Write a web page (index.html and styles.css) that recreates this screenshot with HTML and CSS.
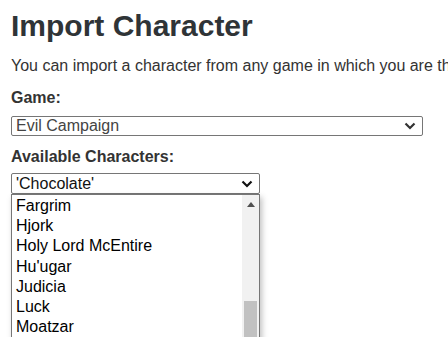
FILE: index.html
```html
<!DOCTYPE html>
<html lang="en">
<head>
  <meta charset="UTF-8">
  <meta name="viewport" content="width=device-width, initial-scale=1.0">
  <title>Import Character</title>
  <link rel="stylesheet" href="styles.css">
</head>
<body>
  <div class="page">
    <h1>Import Character</h1>
    <p class="intro">You can import a character from any game in which you are the GM.</p>

    <label class="field-label" for="game">Game:</label>
    <div class="fake-select game-select">
      <span>Evil Campaign</span>
      <svg class="chev" width="12" height="8" viewBox="0 0 12 8"><path d="M1.5 1.5 L6 6 L10.5 1.5" fill="none" stroke="#333" stroke-width="2.2"/></svg>
    </div>

    <label class="field-label chars-label" for="chars">Available Characters:</label>
    <div class="char-wrap">
      <div class="fake-select char-select">
        <span>'Chocolate'</span>
        <svg class="chev" width="12" height="8" viewBox="0 0 12 8"><path d="M1.5 1.5 L6 6 L10.5 1.5" fill="none" stroke="#111" stroke-width="2.2"/></svg>
      </div>
      <div class="dropdown">
        <ul class="options">
          <li>Fargrim</li>
          <li>Hjork</li>
          <li>Holy Lord McEntire</li>
          <li>Hu'ugar</li>
          <li>Judicia</li>
          <li>Luck</li>
          <li>Moatzar</li>
        </ul>
        <div class="scrollbar">
          <svg class="arrow-up" width="8" height="5" viewBox="0 0 8 5"><path d="M0 5 L4 0 L8 5 Z" fill="#505050"/></svg>
          <div class="thumb"></div>
        </div>
      </div>
    </div>
  </div>
</body>
</html>
```

FILE: styles.css
```css
body {
  margin: 0;
  padding: 0;
  background: #fff;
}
.page {
  padding: 0 11px;
  height: 337px;
  box-sizing: border-box;
  overflow: hidden;
  font-family: "Liberation Sans", Arial, sans-serif;
  color: #333;
  white-space: nowrap;
}
h1 {
  font-size: 30px;
  font-weight: bold;
  margin: 0;
  padding-top: 8px;
  line-height: 36px;
  color: #2f3437;
}
.intro {
  font-size: 16px;
  margin: 12px 0 0 0;
  line-height: 20px;
}
.field-label {
  display: block;
  font-size: 16px;
  font-weight: bold;
  line-height: 20px;
  margin-top: 12px;
}
.fake-select {
  display: flex;
  align-items: center;
  justify-content: space-between;
  box-sizing: border-box;
  height: 20px;
  border: 1px solid #767676;
  border-radius: 2px;
  padding: 0 6px 0 4px;
  font-size: 16px;
}
.game-select {
  width: 412px;
  margin-top: 8px;
  color: #444;
}
.chars-label {
  margin-top: 11px;
}
.char-wrap {
  width: 249px;
  margin-top: 6px;
}
.char-select {
  height: 21px;
  color: #111;
}
.dropdown {
  position: relative;
  width: 249px;
  height: 150px;
  box-sizing: border-box;
  border: 1px solid #767676;
  background: #fff;
  display: flex;
  box-shadow: 2px 3px 6px rgba(0, 0, 0, 0.25);
  overflow: hidden;
}
.options {
  list-style: none;
  margin: 0;
  padding: 1px 0 0 0;
  flex: 1;
  color: #000;
  font-size: 16px;
}
.options li {
  height: 20.2px;
  line-height: 20px;
  padding-left: 4px;
}
.scrollbar {
  width: 17px;
  background: #f1f1f1;
  position: relative;
}
.arrow-up {
  position: absolute;
  left: 5px;
  top: 7px;
}
.thumb {
  position: absolute;
  left: 2px;
  right: 2px;
  top: 106px;
  bottom: 0;
  background: #c1c1c1;
}
```
